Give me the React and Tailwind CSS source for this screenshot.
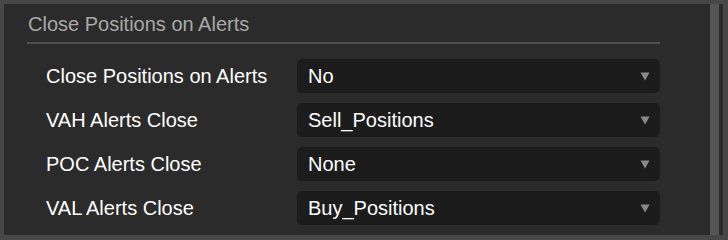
import React from 'react';

const ROWS = [
  { label: 'Close Positions on Alerts', value: 'No' },
  { label: 'VAH Alerts Close', value: 'Sell_Positions' },
  { label: 'POC Alerts Close', value: 'None' },
  { label: 'VAL Alerts Close', value: 'Buy_Positions' },
];

function Select({ value }) {
  return (
    <div className="flex items-center justify-between w-[363px] h-[34px] rounded-[5px] bg-[#1c1c1c] pl-[11px] pr-[10px]">
      <span className="text-white">{value}</span>
      <svg width="10" height="10" viewBox="0 0 10 10">
        <path d="M0.5 1.5 L9.5 1.5 L5 9.5 Z" fill="#8a8a8a" />
      </svg>
    </div>
  );
}

export default function App() {
  return (
    <div
      className="flex h-[240px] w-[728px] bg-[#474747] pt-[4px] pb-[5px] pl-[4px] pr-[5px] text-[20px]"
      style={{ fontFamily: '"Liberation Sans", Arial, sans-serif' }}
    >
      <div className="flex-1 bg-[#2b2b2b] pl-[23px] pr-[50px]">
        {/* Section header */}
        <div className="pt-[9px] pb-[7px] border-b-2 border-[#4e4e4e] text-[#a9a9a9] leading-[22px] pl-[1px]">
          Close Positions on Alerts
        </div>

        {/* Rows */}
        <div className="flex flex-col gap-[10px] pt-[15px] pl-[19px]">
          {ROWS.map((r) => (
            <div key={r.label} className="flex items-center justify-between">
              <span className="text-white">{r.label}</span>
              <Select value={r.value} />
            </div>
          ))}
        </div>
      </div>
      <div className="w-[9px] bg-[#555555]" />
      <div className="w-[4px] bg-[#2b2b2b]" />
    </div>
  );
}
